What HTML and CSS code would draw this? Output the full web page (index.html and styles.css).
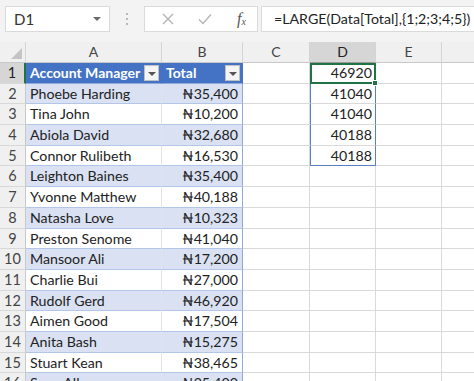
FILE: index.html
```html
<!DOCTYPE html>
<html>
<head>
<meta charset="utf-8">
<link rel="stylesheet" href="styles.css">
</head>
<body>
<div class="toolbar">
  <div class="namebox"><span class="name">D1</span><span class="arrow"></span></div>
  <div class="dots"><i></i><i></i><i></i></div>
  <div class="iconbox">
    <svg class="ic" width="14" height="14" viewBox="0 0 14 14"><path d="M2 2L12 12M12 2L2 12" stroke="#b4b4b4" stroke-width="1.4" fill="none"/></svg>
    <svg class="ic" width="16" height="14" viewBox="0 0 16 14"><path d="M2 7.5L6 11.5L14 2.5" stroke="#b4b4b4" stroke-width="1.4" fill="none"/></svg>
    <span class="fx">f<sub>x</sub></span>
  </div>
  <div class="formula">=LARGE(Data[Total],{1;2;3;4;5})</div>
</div>
<div class="sheet">
  <div class="ch corner"><span class="tri"></span></div><div class="ch">A</div><div class="ch">B</div><div class="ch">C</div><div class="ch act">D</div><div class="ch">E</div><div class="ch"></div>

  <div class="rh act">1</div><div class="c th">Account Manager<span class="flt"></span></div><div class="c th">Total<span class="flt"></span></div><div class="c"></div><div class="c num d1">46920<span class="handle"></span></div><div class="c"></div><div class="c"></div>

  <div class="rh">2</div><div class="c t b">Phoebe Harding</div><div class="c t b num">₦35,400</div><div class="c"></div><div class="c num sp">41040</div><div class="c"></div><div class="c"></div>
  <div class="rh">3</div><div class="c t">Tina John</div><div class="c t num">₦10,200</div><div class="c"></div><div class="c num sp">41040</div><div class="c"></div><div class="c"></div>
  <div class="rh">4</div><div class="c t b">Abiola David</div><div class="c t b num">₦32,680</div><div class="c"></div><div class="c num sp">40188</div><div class="c"></div><div class="c"></div>
  <div class="rh">5</div><div class="c t">Connor Rulibeth</div><div class="c t num">₦16,530</div><div class="c"></div><div class="c num sp last">40188</div><div class="c"></div><div class="c"></div>
  <div class="rh">6</div><div class="c t b">Leighton Baines</div><div class="c t b num">₦35,400</div><div class="c"></div><div class="c"></div><div class="c"></div><div class="c"></div>
  <div class="rh">7</div><div class="c t">Yvonne Matthew</div><div class="c t num">₦40,188</div><div class="c"></div><div class="c"></div><div class="c"></div><div class="c"></div>
  <div class="rh">8</div><div class="c t b">Natasha Love</div><div class="c t b num">₦10,323</div><div class="c"></div><div class="c"></div><div class="c"></div><div class="c"></div>
  <div class="rh">9</div><div class="c t">Preston Senome</div><div class="c t num">₦41,040</div><div class="c"></div><div class="c"></div><div class="c"></div><div class="c"></div>
  <div class="rh">10</div><div class="c t b">Mansoor Ali</div><div class="c t b num">₦17,200</div><div class="c"></div><div class="c"></div><div class="c"></div><div class="c"></div>
  <div class="rh">11</div><div class="c t">Charlie Bui</div><div class="c t num">₦27,000</div><div class="c"></div><div class="c"></div><div class="c"></div><div class="c"></div>
  <div class="rh">12</div><div class="c t b">Rudolf Gerd</div><div class="c t b num">₦46,920</div><div class="c"></div><div class="c"></div><div class="c"></div><div class="c"></div>
  <div class="rh">13</div><div class="c t">Aimen Good</div><div class="c t num">₦17,504</div><div class="c"></div><div class="c"></div><div class="c"></div><div class="c"></div>
  <div class="rh">14</div><div class="c t b">Anita Bash</div><div class="c t b num">₦15,275</div><div class="c"></div><div class="c"></div><div class="c"></div><div class="c"></div>
  <div class="rh">15</div><div class="c t">Stuart Kean</div><div class="c t num">₦38,465</div><div class="c"></div><div class="c"></div><div class="c"></div><div class="c"></div>
  <div class="rh">16</div><div class="c t b">Sean Allen</div><div class="c t b num">₦25,400</div><div class="c"></div><div class="c"></div><div class="c"></div><div class="c"></div>
</div>
</body>
</html>
```

FILE: styles.css
```css
* { box-sizing: border-box; }
html, body { margin: 0; padding: 0; }
body {
  width: 474px;
  height: 381px;
  overflow: hidden;
  background: #ffffff;
  font-family: "Lato", "Noto Sans", "DejaVu Sans", sans-serif;
  color: #222;
}
.toolbar {
  height: 42px;
  background: #f3f3f3;
  display: flex;
  align-items: flex-start;
  padding-top: 6px;
  padding-left: 5px;
}
.namebox {
  width: 105px;
  height: 26px;
  background: #fff;
  border: 1px solid #dadada;
  display: flex;
  align-items: center;
  justify-content: space-between;
  padding: 0 8px 0 8px;
}
.name { font-size: 15px; color: #333; }
.arrow {
  width: 0; height: 0;
  border-left: 4px solid transparent;
  border-right: 4px solid transparent;
  border-top: 4px solid #6a6a6a;
}
.dots {
  width: 34px;
  height: 26px;
  display: flex;
  flex-direction: column;
  align-items: center;
  justify-content: center;
  gap: 3px;
}
.dots i { display: block; width: 2px; height: 2px; background: #b8b8b8; }
.iconbox {
  width: 114px;
  height: 26px;
  background: #fff;
  border: 1px solid #dadada;
  display: flex;
  align-items: center;
  padding-left: 16px;
  gap: 22px;
}
.fx {
  font-family: "Liberation Serif", serif;
  font-style: italic;
  font-size: 16px;
  color: #555;
  margin-left: 2px;
}
.fx sub { font-size: 10px; vertical-align: -1px; }
.formula {
  flex: 1;
  margin-left: 3px;
  height: 26px;
  background: #fff;
  border: 1px solid #dadada;
  border-right: none;
  padding-left: 12px;
  font-size: 14.2px;
  line-height: 24px;
  color: #222;
  white-space: nowrap;
}
.sheet {
  display: grid;
  grid-template-columns: 26px 136px 81px 67px 66px 66px 40px;
  grid-template-rows: 21px repeat(16, 20.7px);
}
.ch {
  background: #f0f0f0;
  border-right: 1px solid #d4d4d4;
  border-bottom: 1px solid #c8c8c8;
  font-size: 14px;
  color: #444;
  text-align: center;
  line-height: 20px;
}
.ch.act {
  background: #d6d6d6;
  color: #222;
  border-bottom: 1px solid #9a9a9a;
}
.corner { position: relative; }
.tri {
  position: absolute;
  right: 3px;
  bottom: 3px;
  width: 0; height: 0;
  border-left: 11px solid transparent;
  border-bottom: 11px solid #c4c4c4;
}
.rh {
  background: #f0f0f0;
  border-right: 1px solid #c8c8c8;
  border-bottom: 1px solid #d8d8d8;
  font-size: 14.5px;
  color: #444;
  text-align: center;
  line-height: 20px;
}
.rh.act {
  background: #d6d6d6;
  color: #222;
  border-right: 2px solid #217346;
}
.c {
  border-right: 1px solid #d9d9d9;
  border-bottom: 1px solid #d9d9d9;
  font-size: 14.2px;
  line-height: 20px;
  padding: 0 4px;
  white-space: nowrap;
  overflow: visible;
}
.num { text-align: right; }
.th {
  background: #4472c4;
  color: #fff;
  font-weight: bold;
  font-size: 14px;
  position: relative;
  border-right: 1px solid #4472c4;
  border-bottom: 1px solid #8ea9db;
}
.flt {
  position: absolute;
  right: 2px;
  top: 2px;
  width: 15px;
  height: 16px;
  background: #f4f4f4;
  border: 1px solid #c0c0c0;
}
.flt::after {
  content: "";
  position: absolute;
  left: 3px;
  top: 6px;
  border-left: 4px solid transparent;
  border-right: 4px solid transparent;
  border-top: 4px solid #555;
}
.t {
  border-bottom: 1px solid #b4c6e7;
  border-right: 1px solid #dfe5f0;
  color: #222;
}
.t.num { border-right: 1px solid #8ea9db; }
.t.b { background: #d9e1f2; }
.d1 {
  position: relative;
  border: 2px solid #217346;
  line-height: 16px;
  padding-right: 2px;
}
.handle {
  position: absolute;
  right: -4px;
  bottom: -4px;
  width: 6px;
  height: 6px;
  background: #217346;
  border: 1px solid #fff;
}
.sp {
  border-left: 1px solid #5b7fc7;
  border-right: 1px solid #5b7fc7;
  padding-right: 3px;
}
.sp.last { border-bottom: 1px solid #5b7fc7; }
```
